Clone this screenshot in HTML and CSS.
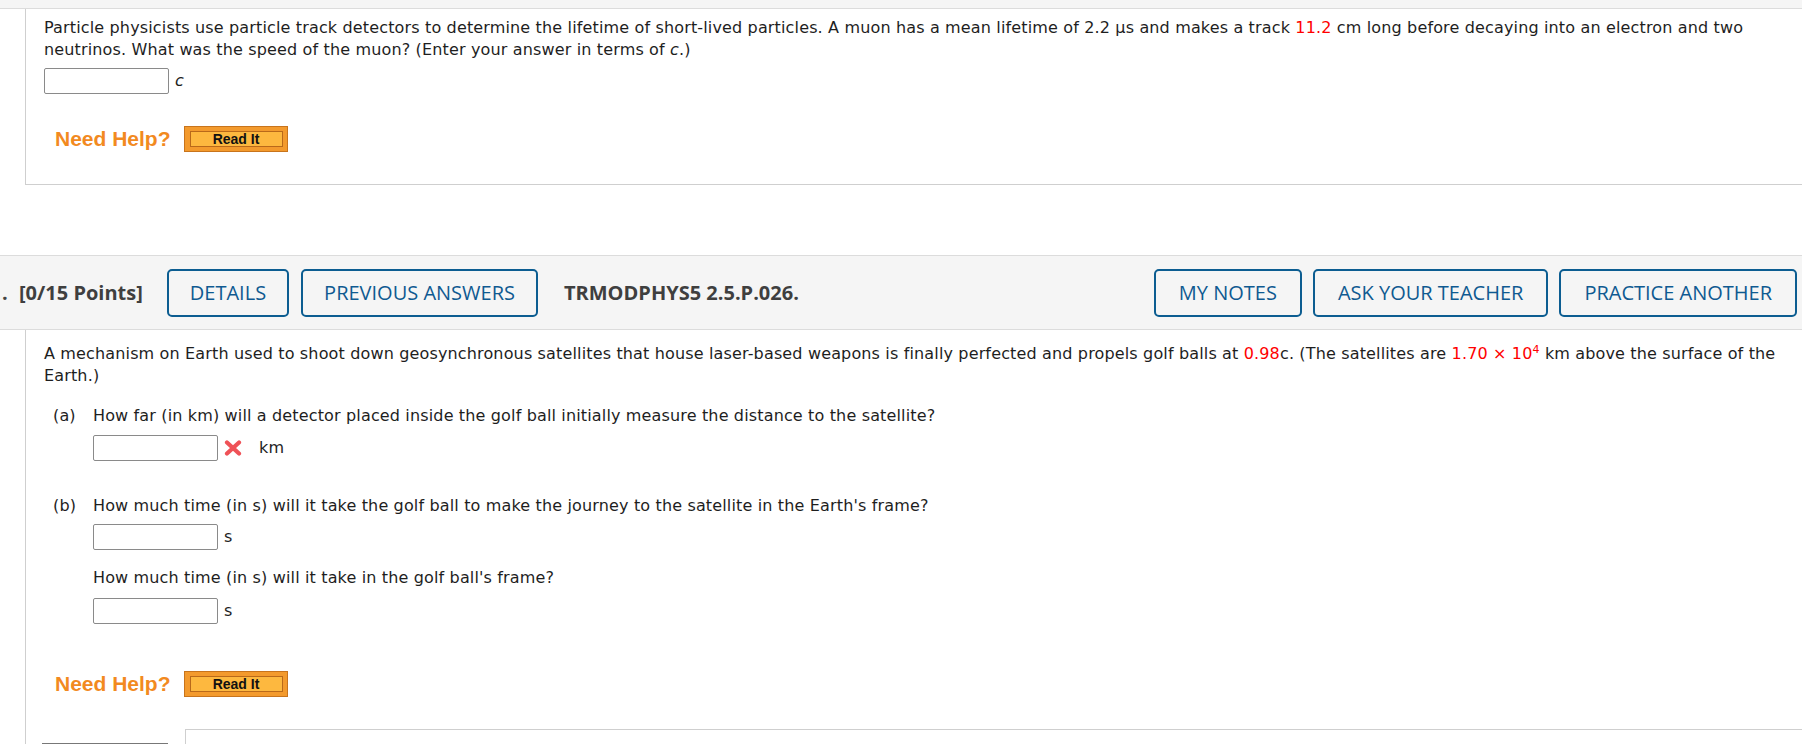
FILE: index.html
```html
<!DOCTYPE html>
<html lang="en">
<head>
<meta charset="utf-8">
<title>Question</title>
<link rel="stylesheet" href="styles.css">
</head>
<body>
<div class="topbar"></div>

<div class="qbody first">
  <p class="qtext">Particle physicists use particle track detectors to determine the lifetime of short-lived particles. A muon has a mean lifetime of 2.2 μs and makes a track <span class="red">11.2</span> cm long before decaying into an electron and two neutrinos. What was the speed of the muon? (Enter your answer in terms of <i>c</i>.)</p>
  <div class="answer first-answer"><input class="box" type="text"><span class="unit"><i>c</i></span></div>
  <div class="help"><span class="need">Need Help?</span><span class="readit"><span class="readit-inner">Read It</span></span></div>
</div>

<div class="qhead">
  <span class="qnum">.</span>
  <span class="points">[0/15 Points]</span>
  <span class="btn btn-details">DETAILS</span>
  <span class="btn btn-prev">PREVIOUS ANSWERS</span>
  <span class="code">TRMODPHYS5 2.5.P.026.</span>
  <div class="right-btns">
    <span class="btn">MY NOTES</span>
    <span class="btn">ASK YOUR TEACHER</span>
    <span class="btn">PRACTICE ANOTHER</span>
  </div>
</div>

<div class="qbody second">
  <p class="qtext">A mechanism on Earth used to shoot down geosynchronous satellites that house laser-based weapons is finally perfected and propels golf balls at <span class="red">0.98</span>c. (The satellites are <span class="red">1.70 × 10<sup>4</sup></span> km above the surface of the Earth.)</p>

  <div class="part part-a">
    <span class="plabel">(a)</span>
    <div class="pbody">
      <div class="ptext">How far (in km) will a detector placed inside the golf ball initially measure the distance to the satellite?</div>
      <div class="answer a-answer"><input class="box" type="text"><svg class="wrong" width="18" height="16" viewBox="0 0 18 16"><path d="M3 2.5 L15 13.5 M15 2.5 L3 13.5" stroke="#ef5257" stroke-width="4.2" stroke-linecap="round" fill="none"/></svg><span class="unit km">km</span></div>
    </div>
  </div>

  <div class="part part-b">
    <span class="plabel">(b)</span>
    <div class="pbody">
      <div class="ptext">How much time (in s) will it take the golf ball to make the journey to the satellite in the Earth's frame?</div>
      <div class="answer b-answer"><input class="box" type="text"><span class="unit">s</span></div>
      <div class="ptext c-text">How much time (in s) will it take in the golf ball's frame?</div>
      <div class="answer c-answer"><input class="box" type="text"><span class="unit">s</span></div>
    </div>
  </div>

  <div class="help help-second"><span class="need">Need Help?</span><span class="readit"><span class="readit-inner">Read It</span></span></div>

  <div class="bottom-row">
    <div class="bottom-left"></div>
    <div class="bottom-box"></div>
  </div>
</div>
</body>
</html>
```

FILE: styles.css
```css
html, body {
  margin: 0;
  padding: 0;
  height: 744px;
  overflow: hidden;
  background: #fff;
}

body {
  font-family: "DejaVu Sans", Verdana, sans-serif;
  font-size: 16px;
  letter-spacing: 0.15px;
  line-height: 22px;
  color: #1e1e1e;
}

.topbar {
  height: 8px;
  background: #f5f5f5;
  border-bottom: 1px solid #dcdcdc;
}

.qbody {
  margin-left: 25px;
  border-left: 1px solid #cfcfcf;
  padding: 8px 8px 0 18px;
}

.qbody.first {
  border-bottom: 1px solid #cfcfcf;
  padding-bottom: 32px;
}

.qbody.second {
  padding-top: 13px;
}

.qtext {
  margin: 0;
}

.red {
  color: #ff0000;
}

sup {
  font-size: 11px;
  line-height: 0;
  vertical-align: 6px;
}

.answer {
  display: flex;
  align-items: center;
  height: 26px;
}

.first-answer { margin-top: 7px; }

.box {
  box-sizing: border-box;
  width: 125px;
  height: 26px;
  margin: 0;
  border: 1px solid #8a8a8a;
  border-radius: 2px;
  background: #fff;
  padding: 0 4px;
}

.unit {
  margin-left: 6px;
}

.wrong {
  margin-left: 6px;
  display: block;
}

.unit.km {
  margin-left: 17px;
}

.help {
  display: flex;
  align-items: center;
  height: 26px;
  margin-top: 32px;
  letter-spacing: 0;
}

.need {
  padding-left: 11px;
  font-family: "Liberation Sans", Arial, sans-serif;
  font-weight: bold;
  font-size: 21px;
  color: #f28a1f;
}

.readit {
  margin-left: 13px;
  box-sizing: border-box;
  width: 104px;
  height: 26px;
  border: 1px solid #c8741c;
  background: #f39a2d;
  padding: 4px 4px 4px 5px;
  display: flex;
}

.readit-inner {
  flex: 1;
  border: 1px solid #b9691a;
  background: #fdb83f;
  font-family: "Liberation Sans", Arial, sans-serif;
  font-weight: bold;
  font-size: 14px;
  line-height: 14px;
  color: #111;
  text-align: center;
}

.qhead {
  margin-top: 70px;
  height: 73px;
  background: #f5f5f5;
  border-top: 1px solid #dcdcdc;
  border-bottom: 1px solid #dcdcdc;
  display: flex;
  align-items: center;
  padding: 0 5px 0 2px;
  font-family: "Open Sans", sans-serif;
  font-size: 20px;
  letter-spacing: 0;
}

.qnum {
  width: 17px;
  font-weight: bold;
  color: #444;
}

.points {
  font-weight: bold;
  color: #3f3f3f;
  margin-right: 24px;
}

.btn {
  box-sizing: border-box;
  height: 48px;
  display: flex;
  align-items: center;
  padding: 0 23px;
  border: 2px solid #0c5d91;
  border-radius: 5px;
  color: #0f5a91;
  white-space: nowrap;
}

.btn-details {
  padding: 0 21px;
}

.btn-prev {
  margin-left: 12px;
  padding: 0 21px;
}

.code {
  margin-left: 26px;
  font-weight: bold;
  color: #3f3f3f;
}

.right-btns {
  margin-left: auto;
  display: flex;
  gap: 11px;
}

.part {
  display: grid;
  grid-template-columns: 40px 1fr;
  padding-left: 9px;
}

.part-a { margin-top: 18px; }
.part-b { margin-top: 34px; }

.a-answer { margin-top: 8px; }
.b-answer { margin-top: 7px; }
.c-text { margin-top: 17px; }
.c-answer { margin-top: 9px; }

.help-second {
  margin-top: 47px;
}

.bottom-row {
  display: flex;
  margin-top: 32px;
  margin-left: -2px;
  margin-right: -40px;
}

.bottom-left {
  width: 126px;
  height: 20px;
  margin-top: 14px;
  border-top: 1px solid #777;
}

.bottom-box {
  flex: 1;
  height: 40px;
  margin-left: 17px;
  border: 1px solid #cfcfcf;
}
```
